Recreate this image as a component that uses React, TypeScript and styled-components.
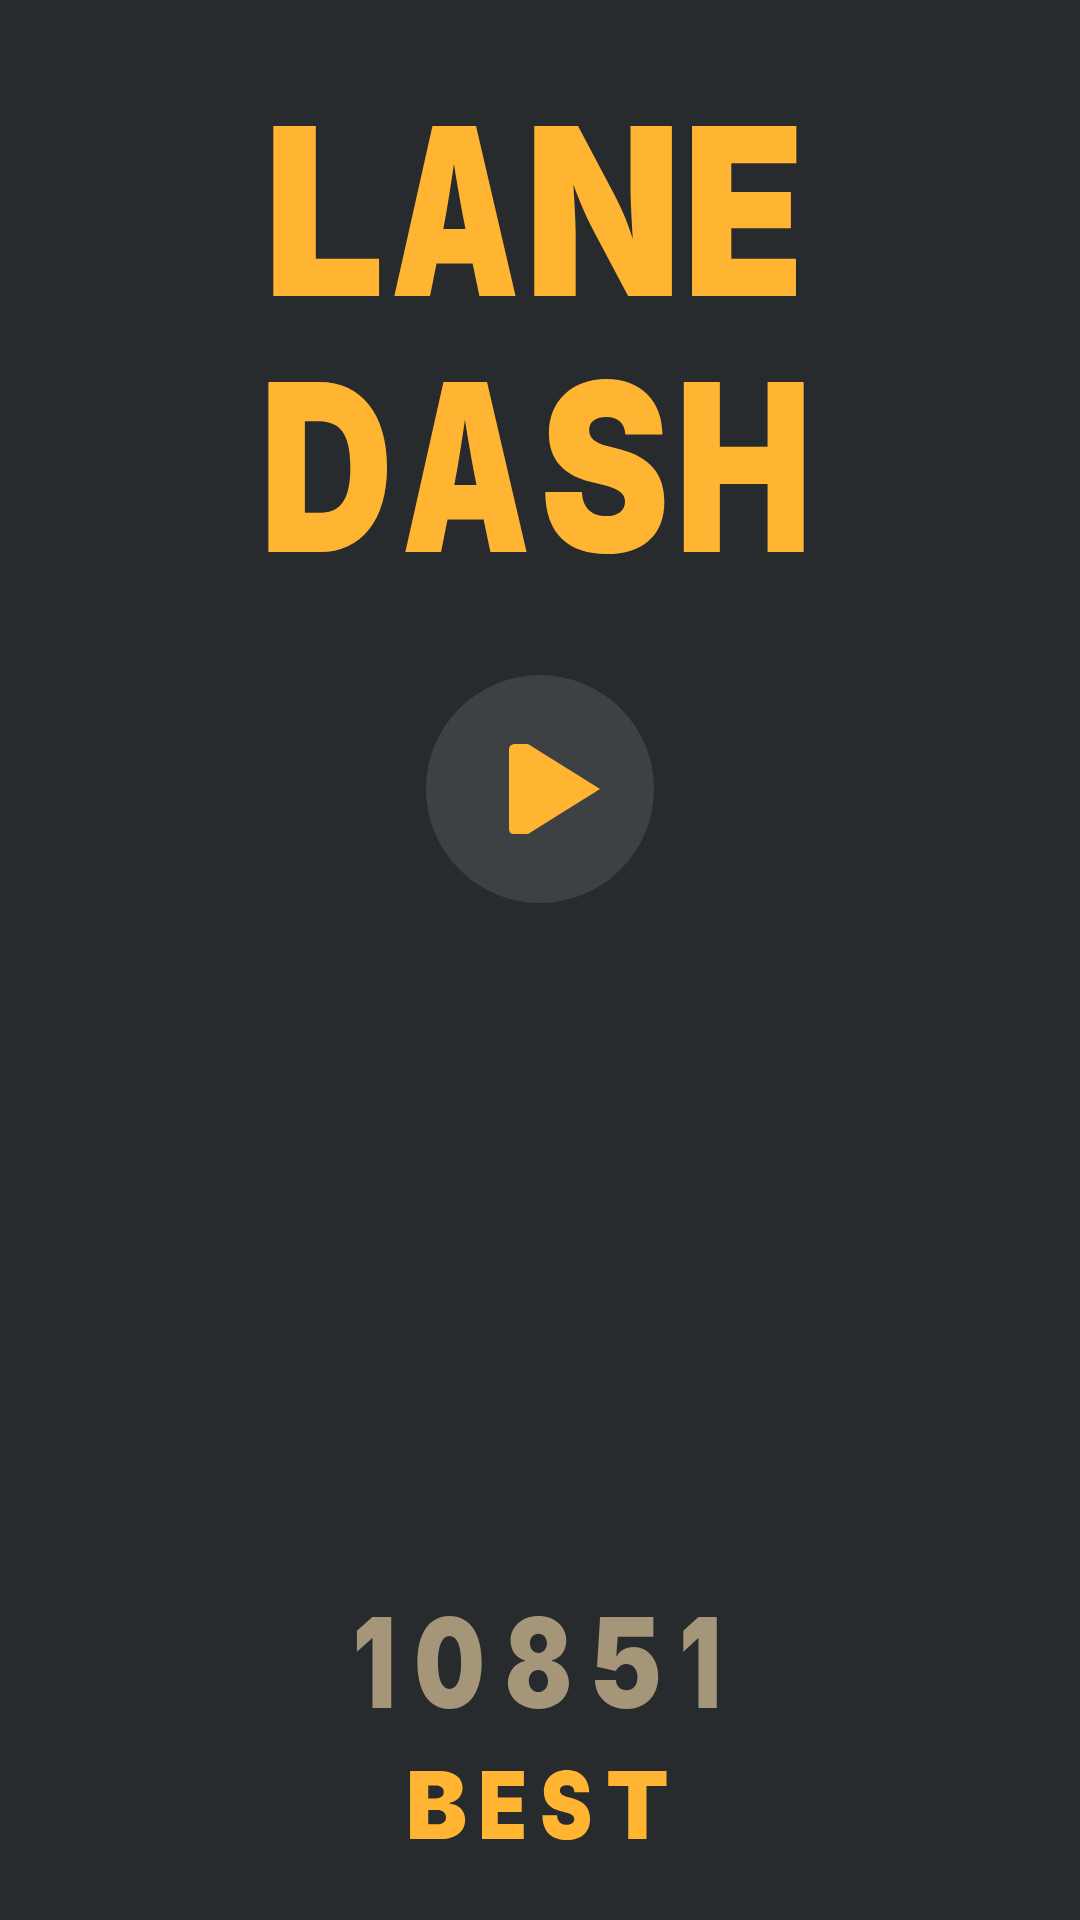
import React from 'react';
import styled, { createGlobalStyle } from 'styled-components';

const ORANGE = '#ffb531';
const MUTED = '#a59679';

const GlobalStyle = createGlobalStyle`
  html, body {
    margin: 0;
    padding: 0;
    background: #282b2e;
  }
`;

const Page = styled.main`
  height: 1920px;
  box-sizing: border-box;
  padding: 126px 0 81px;
  display: flex;
  flex-direction: column;
  align-items: center;
  font-family: Inter, "Liberation Sans", sans-serif;
  font-weight: 900;
`;

const Title = styled.h1`
  margin: 0;
  display: flex;
  flex-direction: column;
  align-items: center;
  gap: 86px;
  font: inherit;
`;

// cap height sets the row height, Inter's caps sit centred in the line box
const Word = styled.div<{ $cap: number; $gap: number; $shift: number; $color: string }>`
  display: flex;
  height: ${p => p.$cap}px;
  gap: ${p => p.$gap}px;
  padding-right: ${p => p.$shift}px;
  font-size: ${p => Math.round(p.$cap / 0.727)}px;
  line-height: ${p => p.$cap}px;
  color: ${p => p.$color};
`;

const Cell = styled.span<{ $w: number }>`
  width: ${p => p.$w}px;
  display: flex;
  justify-content: center;
`;

const Glyph = styled.span<{ $s: number }>`
  display: block;
  transform: scaleX(${p => p.$s});
`;

const PlayButton = styled.button`
  width: 228px;
  height: 228px;
  margin-top: 123px;
  padding: 0 0 0 29px;
  border: none;
  border-radius: 50%;
  background: #3e4144;
  display: flex;
  align-items: center;
  justify-content: center;
`;

const Stats = styled.section`
  margin-top: auto;
  display: flex;
  flex-direction: column;
  align-items: center;
  gap: 63px;
`;

type Letter = [string, number, number];

const LANE: Letter[] = [['L', 103, 0.92], ['A', 120, 0.69], ['N', 138, 0.87], ['E', 106, 0.85]];
const DASH: Letter[] = [['D', 119, 0.79], ['A', 119, 0.69], ['S', 119, 0.835], ['H', 118, 0.78]];
const SCORE: Letter[] = [['1', 37, 0.76], ['0', 65, 0.8], ['8', 64, 0.8], ['5', 64, 0.87], ['1', 36, 0.74]];
const BEST: Letter[] = [['B', 54, 0.98], ['E', 43, 0.85], ['S', 48, 0.83], ['T', 59, 0.98]];

const Letters: React.FC<{ items: Letter[] }> = ({ items }) => (
  <>
    {items.map(([ch, w, s], i) => (
      <Cell key={i} $w={w}>
        <Glyph $s={s}>{ch}</Glyph>
      </Cell>
    ))}
  </>
);

export default function App() {
  return (
    <>
      <GlobalStyle />
      <Page>
        <Title>
          <Word $cap={170} $gap={19} $shift={10} $color={ORANGE}><Letters items={LANE} /></Word>
          <Word $cap={170} $gap={20} $shift={10} $color={ORANGE}><Letters items={DASH} /></Word>
        </Title>
        <PlayButton aria-label="Play">
          <svg width="91" height="90" viewBox="0 0 91 90">
            <path d="M5 0H19L91 45L19 90H5Q0 90 0 85V5Q0 1 5 0Z" fill={ORANGE} />
          </svg>
        </PlayButton>
        <Stats>
          <Word $cap={91} $gap={24} $shift={6} $color={MUTED}><Letters items={SCORE} /></Word>
          <Word $cap={68} $gap={18} $shift={4} $color={ORANGE}><Letters items={BEST} /></Word>
        </Stats>
      </Page>
    </>
  );
}
